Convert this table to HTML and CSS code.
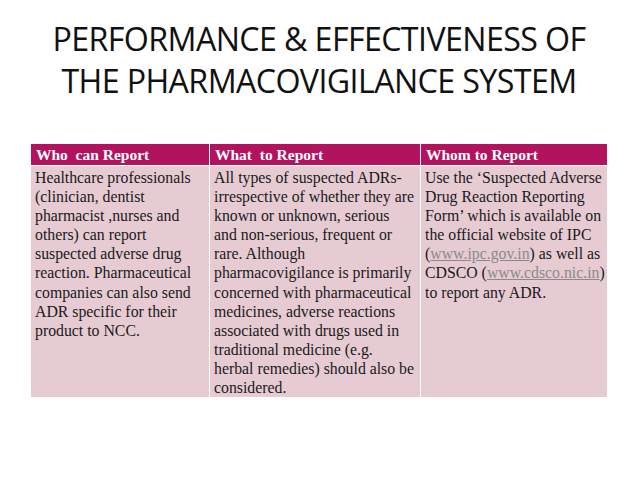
FILE: index.html
```html
<!DOCTYPE html>
<html>
<head>
<meta charset="utf-8">
<link rel="stylesheet" href="styles.css">
</head>
<body>
<div class="slide">
  <h1 class="title">PERFORMANCE &amp; EFFECTIVENESS OF<br>THE PHARMACOVIGILANCE SYSTEM</h1>
  <table class="grid">
    <colgroup>
      <col class="c1"><col class="c2"><col class="c3">
    </colgroup>
    <thead>
      <tr>
        <th>Who&nbsp; can Report</th>
        <th>What&nbsp; to Report</th>
        <th>Whom to Report</th>
      </tr>
    </thead>
    <tbody>
      <tr>
        <td>Healthcare professionals<br>(clinician, dentist<br>pharmacist ,nurses and<br>others) can report<br>suspected adverse drug<br>reaction. Pharmaceutical<br>companies can also send<br>ADR specific for their<br>product to NCC.</td>
        <td>All types of suspected ADRs-<br>irrespective of whether they are<br>known or unknown, serious<br>and non-serious, frequent or<br>rare. Although<br>pharmacovigilance is primarily<br>concerned with pharmaceutical<br>medicines, adverse reactions<br>associated with drugs used in<br>traditional medicine (e.g.<br>herbal remedies) should also be<br>considered.</td>
        <td>Use the ‘Suspected Adverse<br>Drug Reaction Reporting<br>Form’ which is available on<br>the official website of IPC<br>(<span class="link">www.ipc.gov.in</span>) as well as<br>CDSCO (<span class="link">www.cdsco.nic.in</span>)<br>to report any ADR.</td>
      </tr>
    </tbody>
  </table>
</div>
</body>
</html>
```
FILE: styles.css
```css
html, body {
  margin: 0;
  padding: 0;
  background: #ffffff;
}
.slide {
  width: 638px;
  height: 478px;
  padding-top: 18px;
  box-sizing: border-box;
}
.title {
  margin: 0 0 41px 0;
  text-align: center;
  font-family: "Open Sans", sans-serif;
  font-weight: 400;
  font-size: 32.2px;
  line-height: 42px;
  letter-spacing: -0.6px;
  color: #111111;
}
.grid {
  margin-left: 30px;
  border-collapse: collapse;
  table-layout: fixed;
  width: 577px;
  font-family: "Liberation Serif", "Times New Roman", serif;
  font-size: 15.8px;
  line-height: 19.1px;
  color: #1a1a1a;
}
.c1 { width: 179px; }
.c2 { width: 211px; }
.c3 { width: 187px; }
.grid th {
  background: #b1135f;
  color: #ffffff;
  font-weight: 700;
  font-size: 15.5px;
  text-align: left;
  height: 22px;
  padding: 0 4px 0 5px;
  border: 1px solid #ffffff;
  line-height: 20px;
  box-sizing: border-box;
}
.grid td {
  background: #e6cbd3;
  vertical-align: top;
  text-align: left;
  white-space: nowrap;
  padding: 2px 2px 0 4px;
  height: 230px;
  border: 1px solid #ffffff;
  box-sizing: border-box;
}
.link {
  color: #8a8a8a;
  text-decoration: underline;
}
```
